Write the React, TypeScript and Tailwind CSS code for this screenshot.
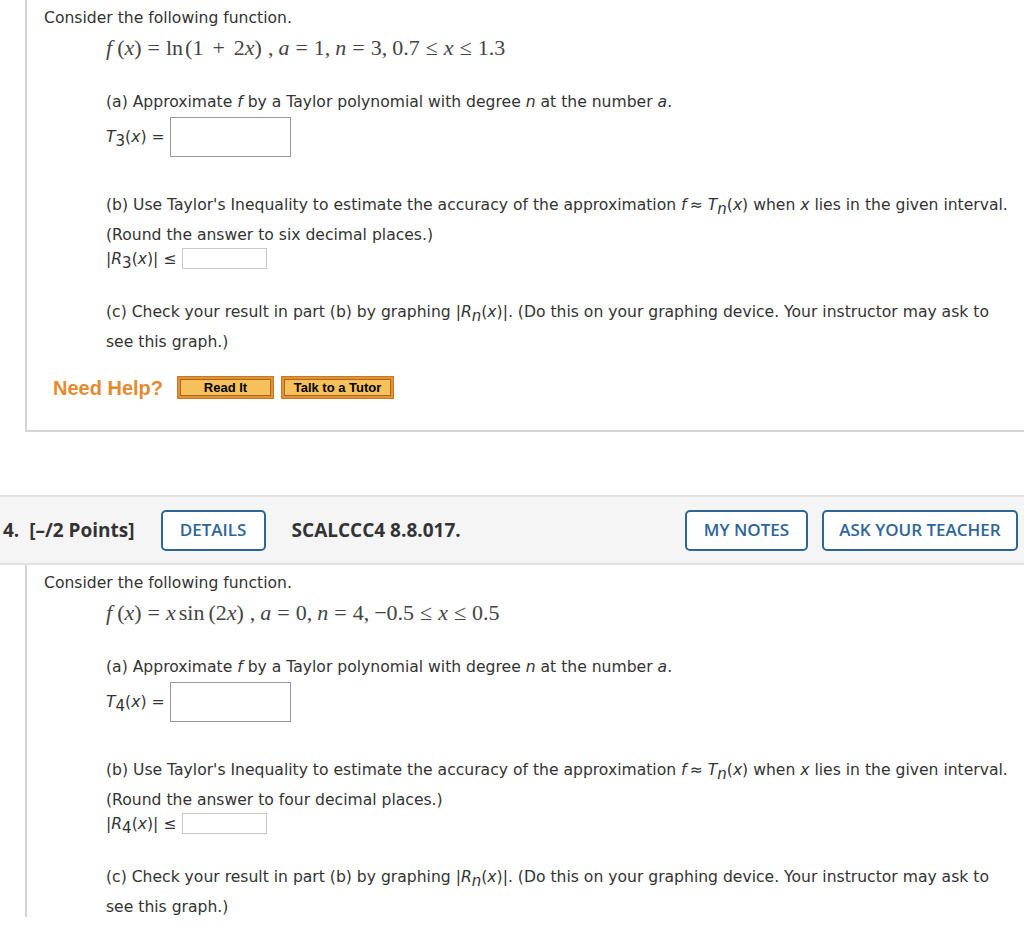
import React from "react";

const body = "font-['DejaVu_Sans',Verdana,sans-serif] text-[15.6px] text-[#333]";
const mathCls = "font-['Liberation_Serif','Times_New_Roman',serif] text-[22px] text-[#444] leading-[24px] whitespace-nowrap";

function I({ children }: { children: React.ReactNode }) {
  return <span className="italic">{children}</span>;
}

function Sub({ children }: { children: React.ReactNode }) {
  return <span className="text-[15px] relative top-[4px] leading-none">{children}</span>;
}

function R({ children }: { children: React.ReactNode }) {
  return <span className="mx-[6px]">{children}</span>;
}

function C() {
  return <span className="mr-[5px]">,</span>;
}

function Math1() {
  return (
    <div className={mathCls}>
      <I>f</I>
      <span className="ml-[5px]">(</span>
      <I>x</I>)<R>=</R>ln<span className="ml-[2px]">(</span>1<span className="mx-[9px]">+</span>2<I>x</I>)
      <span className="ml-[6px]" />
      <C />
      <I>a</I>
      <R>=</R>1<C />
      <I>n</I>
      <R>=</R>3<C />
      0.7<R>≤</R>
      <I>x</I>
      <R>≤</R>1.3
    </div>
  );
}

function Math2() {
  return (
    <div className={mathCls}>
      <I>f</I>
      <span className="ml-[5px]">(</span>
      <I>x</I>)<R>=</R>
      <I>x</I>
      <span className="ml-[3px]">sin</span>
      <span className="ml-[4px]">(</span>2<I>x</I>)<span className="ml-[6px]" />
      <C />
      <I>a</I>
      <R>=</R>0<C />
      <I>n</I>
      <R>=</R>4<C />
      −0.5<R>≤</R>
      <I>x</I>
      <R>≤</R>0.5
    </div>
  );
}

function Problem({ math, n, places, help }: { math: React.ReactNode; n: string; places: string; help: boolean }) {
  return (
    <div className={`pl-[17px] pt-[8px] ${body}`}>
      <div className="leading-[20px]">Consider the following function.</div>
      <div className="ml-[62px] mt-[8px]">{math}</div>
      <div className="ml-[62px]">
        <div className="mt-[32px] leading-[20px]">
          (a) Approximate <I>f</I> by a Taylor polynomial with degree <I>n</I> at the number <I>a</I>.
        </div>
        <div className="mt-[5px] flex items-center h-[40px]">
          <span className="leading-[20px]">
            <I>T</I>
            <Sub>{n}</Sub>(<I>x</I>) =
          </span>
          <span className="ml-[5px] w-[121px] h-[40px] border border-[#999] bg-white" />
        </div>
        <div className="mt-[38px] leading-[20px] whitespace-nowrap">
          (b) Use Taylor's Inequality to estimate the accuracy of the approximation <I>f</I>{"\u2009"}≈ <I>T</I>
          <Sub>
            <I>n</I>
          </Sub>
          (<I>x</I>) when <I>x</I> lies in the given interval.
        </div>
        <div className="mt-[10px] leading-[20px]">(Round the answer to {places} decimal places.)</div>
        <div className="mt-[3px] flex items-center h-[21px]">
          <span className="leading-[20px]">
            |<I>R</I>
            <Sub>{n}</Sub>(<I>x</I>)| ≤
          </span>
          <span className="ml-[6px] w-[85px] h-[21px] border border-[#c8c8c8] bg-white" />
        </div>
        <div className="mt-[33px] leading-[20px] whitespace-nowrap">
          (c) Check your result in part (b) by graphing |<I>R</I>
          <Sub>
            <I>n</I>
          </Sub>
          (<I>x</I>)|. (Do this on your graphing device. Your instructor may ask to
        </div>
        <div className="mt-[10px] leading-[20px]">see this graph.)</div>
      </div>
      {help && (
        <div className="mt-[24px] ml-[9px] flex items-center h-[23px] pb-[31px] box-content">
          <span className="font-['Liberation_Sans',Arial,sans-serif] font-bold text-[20px] text-[#e58a2e] mr-[14px]">
            Need Help?
          </span>
          <HelpBtn w="w-[97px]">Read It</HelpBtn>
          <span className="w-[7px]" />
          <HelpBtn w="w-[113px]">Talk to a Tutor</HelpBtn>
        </div>
      )}
    </div>
  );
}

function HelpBtn({ children, w }: { children: React.ReactNode; w: string }) {
  return (
    <span className={`${w} h-[23px] bg-[#e49035] border border-[#c9782a] p-[2px] flex`}>
      <span className="flex-1 bg-[#f6c05a] border border-[#a8671f] flex items-center justify-center font-['Liberation_Sans',Arial,sans-serif] font-bold text-[13px] text-black leading-none">
        {children}
      </span>
    </span>
  );
}

function OutlineBtn({ children, w }: { children: React.ReactNode; w: string }) {
  return (
    <span
      className={`${w} h-[41px] border-2 border-[#2e6599] rounded-[5px] bg-white flex items-center justify-center font-['Open_Sans',sans-serif] font-semibold text-[17px] text-[#2e6599]`}
    >
      {children}
    </span>
  );
}

export default function App() {
  return (
    <div className="w-[1024px] h-[926px] bg-white overflow-hidden">
      <div className="ml-[25px] border-l-2 border-b-2 border-[#d4d4d4]">
        <Problem math={<Math1 />} n="3" places="six" help={true} />
      </div>
      <div className="mt-[63px] h-[70px] border-t-2 border-b-2 border-[#e2e2e2] bg-[#f5f5f5] flex items-center font-['Open_Sans',sans-serif] text-[#333]">
        <span className="ml-[3px] font-bold text-[19px]">4.&nbsp; [–/2 Points]</span>
        <span className="ml-[26px]">
          <OutlineBtn w="w-[105px]">DETAILS</OutlineBtn>
        </span>
        <span className="ml-[26px] font-bold text-[19px]">SCALCCC4 8.8.017.</span>
        <span className="ml-auto">
          <OutlineBtn w="w-[123px]">MY NOTES</OutlineBtn>
        </span>
        <span className="ml-[14px] mr-[6px]">
          <OutlineBtn w="w-[196px]">ASK YOUR TEACHER</OutlineBtn>
        </span>
      </div>
      <div className="ml-[25px] border-l-2 border-[#d4d4d4]">
        <Problem math={<Math2 />} n="4" places="four" help={false} />
      </div>
    </div>
  );
}
